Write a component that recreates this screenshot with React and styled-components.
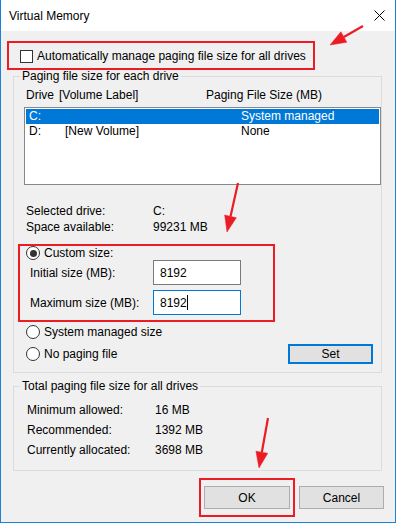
import React from "react";
import styled, { createGlobalStyle, css } from "styled-components";

const accent = "#0078d7";
const mark = "#ec1c24";

const GlobalStyle = createGlobalStyle`
  html, body {
    margin: 0;
    padding: 0;
    background: #ffffff;
  }
  body {
    font-family: "Liberation Sans", Arial, sans-serif;
    font-size: 12px;
    color: #000000;
  }
`;

const Window = styled.div`
  position: relative;
  width: 396px;
  height: 523px;
  box-sizing: border-box;
  background: #f0f0f0;
  border: 1px solid #1883d7;
  border-top: none;
  display: flex;
  flex-direction: column;
`;

const TitleBar = styled.div`
  height: 31px;
  background: #ffffff;
  display: flex;
  align-items: center;
  justify-content: space-between;
  padding: 0 10px 0 8px;
`;

const CloseIcon = styled.svg`
  width: 11px;
  height: 11px;
`;

const Body = styled.div`
  display: flex;
  flex-direction: column;
  padding: 0 13px 0 12px;
`;

const CheckRow = styled.label`
  display: flex;
  align-items: center;
  gap: 4px;
  height: 14px;
  margin: 18px 0 0 7px;
`;

const Checkbox = styled.span`
  width: 11px;
  height: 11px;
  border: 1px solid #333333;
  background: #ffffff;
`;

const Group = styled.fieldset`
  margin: ${(p) => p.$top}px 0 0 0;
  padding: 0 0 ${(p) => p.$bottom}px 0;
  border: 1px solid #dcdcdc;
  min-width: 0;
  width: 369px;
  box-sizing: border-box;
`;

const Legend = styled.legend`
  margin-left: 6px;
  padding: 0 2px;
  line-height: 14px;
`;

const Inner = styled.div`
  display: flex;
  flex-direction: column;
  padding-left: 10px;
`;

const HeaderRow = styled.div`
  display: flex;
  height: 16px;
  line-height: 16px;
  margin: 4px 0 0 2px;
`;

const Col = styled.span`
  width: ${(p) => p.$w}px;
  flex: none;
`;

const ListBox = styled.div`
  margin-top: 4px;
  height: 78px;
  width: 357px;
  box-sizing: border-box;
  border: 1px solid #828790;
  background: #ffffff;
  padding: 1px;
`;

const ListRow = styled.div`
  display: flex;
  height: 15px;
  line-height: 15px;
  padding-left: 3px;
  ${(p) =>
    p.$selected &&
    css`
      background: ${accent};
      color: #ffffff;
    `}
`;

const InfoRow = styled.div`
  display: flex;
  height: 16px;
  line-height: 16px;
  margin: ${(p) => p.$top || 0}px 0 0 2px;
`;

const RadioRow = styled.label`
  display: flex;
  align-items: center;
  gap: 4px;
  height: 14px;
  margin: ${(p) => p.$top || 0}px 0 0 ${(p) => p.$left ?? 2}px;
`;

const Radio = styled.span`
  width: 12px;
  height: 12px;
  border: 1px solid #333333;
  border-radius: 50%;
  background: #ffffff;
  display: flex;
  align-items: center;
  justify-content: center;
  &::after {
    content: "";
    width: 7px;
    height: 7px;
    border-radius: 50%;
    background: ${(p) => (p.$checked ? "#333333" : "transparent")};
  }
`;

const FieldRow = styled.div`
  display: flex;
  align-items: center;
  height: 25px;
  margin: ${(p) => p.$top || 0}px 0 0 6px;
`;

const FieldLabel = styled.span`
  width: 123px;
`;

const Input = styled.div`
  width: 88px;
  height: 25px;
  box-sizing: border-box;
  border: 1px solid ${(p) => (p.$focused ? accent : "#7a7a7a")};
  background: #ffffff;
  display: flex;
  align-items: center;
  padding-left: 6px;
`;

const Caret = styled.span`
  width: 1px;
  height: 15px;
  background: #000000;
`;

const SetRow = styled.div`
  display: flex;
  align-items: center;
  justify-content: space-between;
  height: 20px;
  margin: 5px 8px 0 2px;
`;

const Button = styled.button`
  width: ${(p) => p.$w}px;
  height: ${(p) => p.$h}px;
  box-sizing: border-box;
  background: #e1e1e1;
  border: ${(p) => (p.$default ? `2px solid ${accent}` : "1px solid #adadad")};
  font-family: inherit;
  font-size: 12px;
  color: #000000;
  padding: 0;
`;

const TotalRow = styled.div`
  display: flex;
  height: 20px;
  line-height: 20px;
  margin: ${(p) => p.$top || 0}px 0 0 13px;
`;

const ButtonBar = styled.div`
  display: flex;
  justify-content: flex-end;
  gap: 9px;
  margin: 15px -2px 0 0;
`;

const Overlay = styled.svg`
  position: absolute;
  left: -1px;
  top: 0;
  width: 396px;
  height: 523px;
  pointer-events: none;
`;

function Arrow({ x1, y1, x2, y2 }) {
  const dx = x2 - x1;
  const dy = y2 - y1;
  const len = Math.hypot(dx, dy);
  const ux = dx / len;
  const uy = dy / len;
  const head = 16;
  const half = 6;
  const bx = x2 - ux * head;
  const by = y2 - uy * head;
  const pts = [
    `${x2},${y2}`,
    `${bx - uy * half},${by + ux * half}`,
    `${bx + uy * half},${by - ux * half}`,
  ].join(" ");
  return (
    <g fill={mark} stroke={mark}>
      <line x1={x1} y1={y1} x2={bx} y2={by} strokeWidth="2.2" />
      <polygon points={pts} strokeWidth="0.5" />
    </g>
  );
}

export default function App() {
  return (
    <>
      <GlobalStyle />
      <Window>
        <TitleBar>
          <span>Virtual Memory</span>
          <CloseIcon viewBox="0 0 11 11">
            <path d="M0.5 0.5 L10.5 10.5 M10.5 0.5 L0.5 10.5" stroke="#000" strokeWidth="1" />
          </CloseIcon>
        </TitleBar>
        <Body>
          <CheckRow>
            <Checkbox />
            Automatically manage paging file size for all drives
          </CheckRow>

          <Group $top={6} $bottom={8}>
            <Legend>Paging file size for each drive</Legend>
            <Inner>
              <HeaderRow>
                <Col $w={33}>Drive</Col>
                <Col $w={147}>[Volume Label]</Col>
                <span>Paging File Size (MB)</span>
              </HeaderRow>
              <ListBox>
                <ListRow $selected>
                  <Col $w={36}>C:</Col>
                  <Col $w={176}></Col>
                  <span>System managed</span>
                </ListRow>
                <ListRow>
                  <Col $w={36}>D:</Col>
                  <Col $w={176}>[New Volume]</Col>
                  <span>None</span>
                </ListRow>
              </ListBox>

              <InfoRow $top={18}>
                <Col $w={127}>Selected drive:</Col>
                <span>C:</span>
              </InfoRow>
              <InfoRow>
                <Col $w={127}>Space available:</Col>
                <span>99231 MB</span>
              </InfoRow>

              <RadioRow $top={11}>
                <Radio $checked />
                Custom size:
              </RadioRow>
              <FieldRow>
                <FieldLabel>Initial size (MB):</FieldLabel>
                <Input>8192</Input>
              </FieldRow>
              <FieldRow $top={5}>
                <FieldLabel>Maximum size (MB):</FieldLabel>
                <Input $focused>
                  8192
                  <Caret />
                </Input>
              </FieldRow>

              <RadioRow $top={10}>
                <Radio />
                System managed size
              </RadioRow>
              <SetRow>
                <RadioRow $left={0} as="span">
                  <Radio />
                  No paging file
                </RadioRow>
                <Button $w={85} $h={20} $default>
                  Set
                </Button>
              </SetRow>
            </Inner>
          </Group>

          <Group $top={6} $bottom={10}>
            <Legend>Total paging file size for all drives</Legend>
            <TotalRow $top={7}>
              <Col $w={128}>Minimum allowed:</Col>
              <span>16 MB</span>
            </TotalRow>
            <TotalRow>
              <Col $w={128}>Recommended:</Col>
              <span>1392 MB</span>
            </TotalRow>
            <TotalRow>
              <Col $w={128}>Currently allocated:</Col>
              <span>3698 MB</span>
            </TotalRow>
          </Group>

          <ButtonBar>
            <Button $w={86} $h={23}>OK</Button>
            <Button $w={85} $h={23}>Cancel</Button>
          </ButtonBar>
        </Body>

        <Overlay viewBox="0 0 396 523">
          <g fill="none" stroke={mark} strokeWidth="2">
            <rect x="8" y="42" width="306" height="27" />
            <rect x="19" y="245" width="255" height="76" />
            <rect x="200" y="479" width="94" height="37" />
          </g>
          <Arrow x1={363} y1={26} x2={330} y2={45} />
          <Arrow x1={238} y1={183} x2={227} y2={232} />
          <Arrow x1={268} y1={418} x2={259} y2={468} />
        </Overlay>
      </Window>
    </>
  );
}
